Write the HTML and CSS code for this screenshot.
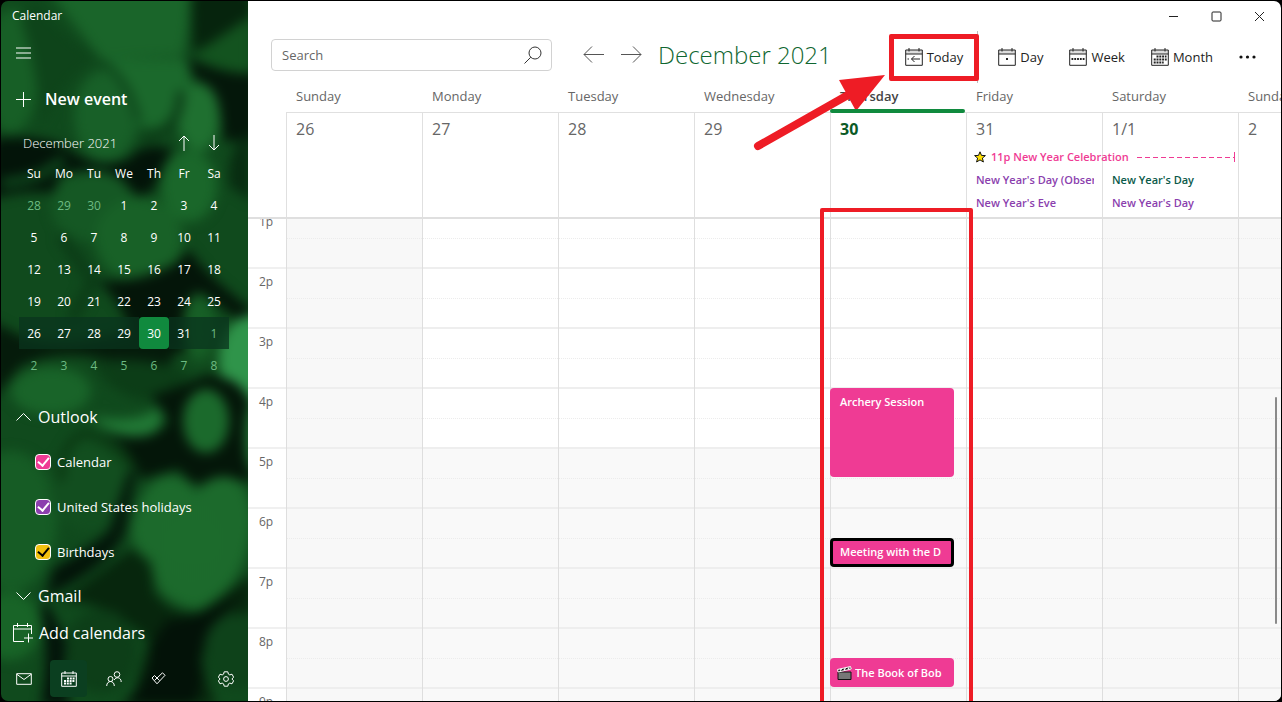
FILE: index.html
```html
<!DOCTYPE html>
<html lang="en">

<head>
    <meta charset="utf-8">
    <title>Calendar</title>
    <link rel="stylesheet" href="styles.css">
</head>

<body>
    <div class="window">
        <aside class="sidebar">
            <svg class="leaves" viewBox="0 0 247 700" preserveAspectRatio="none" aria-hidden="true">
                <defs>
                    <filter id="soft" x="-20%" y="-20%" width="140%" height="140%" color-interpolation-filters="sRGB">
                        <feGaussianBlur stdDeviation="6" />
                    </filter>
                    <radialGradient id="leaf">
                        <stop offset="0" stop-color="#1a672a" />
                        <stop offset="1" stop-color="#12501f" />
                    </radialGradient>
                    <radialGradient id="bright">
                        <stop offset="0" stop-color="#1c6b2c" />
                        <stop offset="1" stop-color="#1c6a2c" />
                    </radialGradient>
                </defs>
                <rect width="247" height="700" fill="#104a1d" />
                <g filter="url(#soft)">
                    <!-- top clover -->
                    <path d="M100 58L40-20H190Q190 20 182 55Z" fill="#1a652a" />
                    <path d="M100 58H185Q200 90 175 118Q150 135 130 120Z" fill="#1b692c" />
                    <ellipse cx="10" cy="70" rx="28" ry="62" fill="#175f26" />
                    <path d="M35 0Q60 35 98 55Q60 80 40 125Q35 60 20 20Z" fill="#0e441a" />
                    <ellipse cx="105" cy="115" rx="32" ry="46" fill="#186028" />
                    <path d="M100 60Q125 75 138 120" stroke="#0d4219" stroke-width="6" />
                    <!-- right edge -->
                    <path d="M190-10H250V20L192 52Z" fill="#06240d" />
                    <path d="M192 54L250 15V75Q215 70 192 54Z" fill="#13531f" />
                    <path d="M186 56Q225 75 255 72V140H222Q222 90 192 76Z" fill="#04170a" />
                    <ellipse cx="198" cy="116" rx="21" ry="34" fill="#1f7030" />
                    <path d="M180 90Q180 130 142 138" stroke="#0b3a16" stroke-width="8" />
                    <!-- gap under the top clover -->
                    <path d="M-10 138Q40 132 68 148Q95 170 128 158Q140 140 172 148L160 170Q150 205 130 190Q100 165 60 172L52 192Q25 188-10 198Z" fill="#031409" />
                    <path d="M0 182Q40 180 62 158" stroke="#0f4a1e" stroke-width="9" />
                    <path d="M250 130Q225 145 228 185L250 200Z" fill="#082c11" />
                    <ellipse cx="188" cy="185" rx="28" ry="36" fill="#1a672a" />
                    <!-- middle clover -->
                    <ellipse cx="92" cy="205" rx="42" ry="36" fill="#155824" />
                    <ellipse cx="138" cy="238" rx="44" ry="42" fill="#186127" />
                    <path d="M60 235L92 280L70 320" stroke="#0b3a16" stroke-width="10" />
                    <path d="M95 280Q140 282 175 262L188 248Q200 270 250 308V330Q215 300 198 292Q190 325 205 350L135 352Q125 300 95 280Z" fill="#041509" />
                    <ellipse cx="198" cy="326" rx="16" ry="34" fill="#175f26" />
                    <path d="M-10 320L20 335Q60 350 130 330L175 350Q165 385 120 362Q60 345 20 365L-10 400Z" fill="#051b0b" />
                    <ellipse cx="252" cy="358" rx="34" ry="44" fill="#2f944a" />
                    <!-- lower clovers -->
                    <ellipse cx="50" cy="390" rx="40" ry="24" fill="#196429" />
                    <path d="M90 360Q150 355 190 372Q170 395 145 400Q110 395 90 360Z" fill="#0c3d17" />
                    <path d="M90 415Q135 425 160 405Q165 435 138 436Q110 436 90 415Z" fill="#217835" />
                    <path d="M150 395Q180 385 205 374Q245 375 252 410L250 480H212Q192 490 178 468L140 478Q130 445 100 430Q150 445 168 420Z" fill="#041609" />
                    <ellipse cx="205" cy="420" rx="23" ry="32" fill="#1b6a2c" />
                    <ellipse cx="252" cy="435" rx="8" ry="34" fill="#217234" />
                    <ellipse cx="10" cy="520" rx="46" ry="70" fill="#165c25" />
                    <ellipse cx="90" cy="485" rx="42" ry="46" fill="#124e1f" />
                    <path d="M60 480Q60 440 85 432Q110 440 132 465" stroke="#09320f" stroke-width="6" />
                    <path d="M132 470Q125 500 122 525Q115 555 50 590L55 570Q100 545 112 530Z" fill="#021007" stroke="#04180b" stroke-width="8" />
                    <!-- heart leaf -->
                    <path d="M130 525Q145 470 175 475Q190 480 195 492Q210 470 235 478Q250 490 252 520Q245 590 195 608Q150 600 152 560Q130 550 130 525Z" fill="url(#bright)" />
                    <!-- bottom -->
                    <path d="M130 548Q155 560 152 590Q170 615 200 612L252 572V610Q210 625 200 660L215 705H130L148 640Q110 600 60 600Z" fill="#07260d" />
                    <path d="M165 620Q210 615 252 580Q210 620 200 655Q205 690 190 705H120Q150 680 150 645Z" fill="#031208" />
                    <path d="M45 600L65 640Q60 680 70 705H40Q50 650 40 610Z" fill="#03130a" />
                    <ellipse cx="8" cy="625" rx="32" ry="34" fill="#186427" />
                    <ellipse cx="100" cy="650" rx="36" ry="42" fill="#0d3e18" />
                    <ellipse cx="235" cy="650" rx="32" ry="38" fill="#0e421a" />
                </g>
            </svg>

            <h1 class="app-name">Calendar</h1>
            <button class="menu-btn" aria-label="Menu">
                <svg width="16" height="12" viewBox="0 0 16 12"><path d="M0 1h15M0 6h15M0 11h15" /></svg>
            </button>
            <button class="new-event">
                <svg width="15" height="15" viewBox="0 0 15 15"><path d="M7.5 0v15M0 7.5h15" /></svg>
                New event
            </button>

            <div class="mini-head">
                <span>December 2021</span>
                <button aria-label="Previous month">
                    <svg width="12" height="16" viewBox="0 0 12 16"><path d="M6 16V1M1 6l5-5 5 5" /></svg>
                </button>
                <button aria-label="Next month">
                    <svg width="12" height="16" viewBox="0 0 12 16"><path d="M6 0v15M1 10l5 5 5-5" /></svg>
                </button>
            </div>
            <table class="mini">
                <thead>
                    <tr><th>Su</th><th>Mo</th><th>Tu</th><th>We</th><th>Th</th><th>Fr</th><th>Sa</th></tr>
                </thead>
                <tbody>
                    <tr><td class="other">28</td><td class="other">29</td><td class="other">30</td><td>1</td><td>2</td><td>3</td><td>4</td></tr>
                    <tr><td>5</td><td>6</td><td>7</td><td>8</td><td>9</td><td>10</td><td>11</td></tr>
                    <tr><td>12</td><td>13</td><td>14</td><td>15</td><td>16</td><td>17</td><td>18</td></tr>
                    <tr><td>19</td><td>20</td><td>21</td><td>22</td><td>23</td><td>24</td><td>25</td></tr>
                    <tr class="current"><td>26</td><td>27</td><td>28</td><td>29</td><td class="selected">30</td><td>31</td><td class="other">1</td></tr>
                    <tr><td class="other">2</td><td class="other">3</td><td class="other">4</td><td class="other">5</td><td class="other">6</td><td class="other">7</td><td class="other">8</td></tr>
                </tbody>
            </table>

            <button class="account">
                <svg width="15" height="8" viewBox="0 0 15 8"><path d="M0.5 7.5l7-7 7 7" /></svg>
                Outlook
            </button>
            <label class="cal pink"><input type="checkbox" checked>Calendar</label>
            <label class="cal purple"><input type="checkbox" checked>United States holidays</label>
            <label class="cal yellow"><input type="checkbox" checked>Birthdays</label>
            <button class="account">
                <svg width="15" height="8" viewBox="0 0 15 8"><path d="M0.5 0.5l7 7 7-7" /></svg>
                Gmail
            </button>
            <button class="add-cal">
                <svg width="20" height="20" viewBox="0 0 20 20"><path d="M11 18.5H.5v-16h18V11M.5 6h18M4.500 0v4M14.500 0v4M15.500 10.500v9M11 15h9" /></svg>
                Add calendars
            </button>

            <nav class="apps">
                <a href="#" aria-label="Mail">
                    <svg width="16" height="12" viewBox="0 0 16 12"><path d="M.7.7h14.600v10.600H.7zM.7 1.200L8 6.500l7.300-5.300" /></svg>
                </a>
                <a href="#" class="active" aria-label="Calendar">
                    <svg width="16" height="16" viewBox="0 0 16 16"><path d="M.7 2h14.600v13.300H.7zM.7 5h14.600M4 0v3M12 0v3" /><path d="M6 7.500h8M3 10h11M3 12.500h8" stroke-width="2" stroke-dasharray="2 .8" /></svg>
                </a>
                <a href="#" aria-label="People">
                    <svg width="16" height="16" viewBox="0 0 16 16"><circle cx="4.500" cy="8" r="2.500" /><circle cx="11" cy="3.500" r="2.800" /><path d="M.7 15c0-6 7.600-6 7.600 0M8.200 9c1.500-3.500 7-3 7 2" /></svg>
                </a>
                <a href="#" aria-label="To Do">
                    <svg width="15" height="13" viewBox="0 0 15 13"><path d="M1 6l2.500-2.500 2.500 2.500L11.500.8 14 3.300 6 11.800zM6 6l2.500 2.500M3.500 8.500L6 6" /></svg>
                </a>
                <a href="#" class="settings" aria-label="Settings">
                    <svg width="16" height="16" viewBox="0 0 16 16"><path d="M6.200.8h3.600l.6 2.300 1.400.8 2.200-.7 1.600 3-1.700 1.800 1.700 1.800-1.600 3-2.200-.7-1.400.8-.6 2.300H6.200l-.6-2.300-1.400-.8-2.200.7-1.600-3L2.100 8 .4 6.200l1.600-3 2.200.7 1.400-.8z" /><circle cx="8" cy="8" r="2.400" /></svg>
                </a>
            </nav>
        </aside>

        <main class="main">
            <div class="titlebar">
                <button aria-label="Minimize"><svg width="11" height="11" viewBox="0 0 11 11"><path d="M1 5.500h9" /></svg></button>
                <button aria-label="Maximize"><svg width="11" height="11" viewBox="0 0 11 11"><rect x="1" y="1" width="9" height="9" rx="1" /></svg></button>
                <button aria-label="Close"><svg width="11" height="11" viewBox="0 0 11 11"><path d="M1 1l9 9M10 1l-9 9" /></svg></button>
            </div>

            <div class="toolbar">
                <div class="search">
                    <input type="text" placeholder="Search" aria-label="Search">
                    <svg width="18" height="18" viewBox="0 0 18 18"><circle cx="11" cy="7" r="6" /><path d="M6.800 11.200L.5 17.500" /></svg>
                </div>
                <div class="pager">
                    <button aria-label="Previous week"><svg width="21" height="18" viewBox="0 0 21 18"><path d="M21 8.500H1M9 .5l-8 8 8 8" /></svg></button>
                    <button aria-label="Next week"><svg width="21" height="18" viewBox="0 0 21 18"><path d="M0 8.500h20M12 .5l8 8-8 8" /></svg></button>
                </div>
                <h2>December 2021</h2>
                <div class="commands">
                    <button class="today-btn">
                        <svg width="18" height="18" viewBox="0 0 18 18"><path class="band" d="M1 2h16v4H1z" /><path d="M.7 2h16.600v15.300H.7zM.7 6h16.600M4 0v3.500M14 0v3.500M15 11H6.500M9.500 8l-3 3 3 3M2.500 11h1.500" /></svg>
                        Today
                    </button>
                    <button>
                        <svg width="18" height="18" viewBox="0 0 18 18"><path class="band" d="M1 2h16v4H1z" /><path d="M.7 2h16.600v15.300H.7zM.7 6h16.600M4 0v3.500M14 0v3.500" /><path d="M8 11h2" stroke-width="2" /></svg>
                        Day
                    </button>
                    <button>
                        <svg width="18" height="18" viewBox="0 0 18 18"><path class="band" d="M1 2h16v4H1z" /><path d="M.7 2h16.600v15.300H.7zM.7 6h16.600M4 0v3.500M14 0v3.500" /><path d="M2.500 11h13" stroke-width="2" stroke-dasharray="1.800 1" /></svg>
                        Week
                    </button>
                    <button>
                        <svg width="18" height="18" viewBox="0 0 18 18"><path class="band" d="M1 2h16v4H1z" /><path d="M.7 2h16.600v15.300H.7zM.7 6h16.600M4 0v3.500M14 0v3.500" /><path d="M5.500 8.500h10M2.700 11.500h13M2.700 14.500h10" stroke-width="2" stroke-dasharray="2 .8" /></svg>
                        Month
                    </button>
                    <button class="more" aria-label="More">
                        <svg width="17" height="4" viewBox="0 0 17 4"><circle cx="2" cy="2" r="1.600" /><circle cx="8.500" cy="2" r="1.600" /><circle cx="15" cy="2" r="1.600" /></svg>
                    </button>
                </div>
            </div>

            <section class="week">
                <div class="row weekdays">
                    <span></span>
                    <span>Sunday</span>
                    <span>Monday</span>
                    <span>Tuesday</span>
                    <span>Wednesday</span>
                    <span class="today">Thursday</span>
                    <span>Friday</span>
                    <span>Saturday</span>
                    <span>Sunday</span>
                </div>

                <div class="dates-wrap">
                    <div class="row dates">
                        <span></span>
                        <div class="date">26</div>
                        <div class="date">27</div>
                        <div class="date">28</div>
                        <div class="date">29</div>
                        <div class="date today">30</div>
                        <div class="date">31</div>
                        <div class="date">1/1</div>
                        <div class="date">2</div>
                    </div>
                    <div class="row alldays">
                        <div class="allday span">
                            <svg width="12" height="12" viewBox="0 0 12 12"><path d="M6 .8l1.500 3.600 3.900.2-3 2.500 1 3.900L6 8.900 2.600 11l1-3.900-3-2.500 3.900-.2z" /></svg>
                            <span>11p New Year Celebration</span>
                        </div>
                        <div class="allday fri second">New Year's Day (Observed)</div>
                        <div class="allday fri third">New Year's Eve</div>
                        <div class="allday sat second green">New Year's Day</div>
                        <div class="allday sat third">New Year's Day</div>
                    </div>
                </div>

                <div class="hours">
                    <div class="row scroll">
                        <div class="times">
                            <span>1p</span>
                            <span>2p</span>
                            <span>3p</span>
                            <span>4p</span>
                            <span>5p</span>
                            <span>6p</span>
                            <span>7p</span>
                            <span>8p</span>
                            <span>9p</span>
                        </div>
                        <div class="day weekend"></div>
                        <div class="day"></div>
                        <div class="day"></div>
                        <div class="day"></div>
                        <div class="day">
                            <div class="event long">Archery Session</div>
                            <div class="event meeting">Meeting with the D</div>
                            <div class="event show">
                                <svg width="15" height="14" viewBox="0 0 15 14"><path d="M1 6h13v7.500H1z" fill="#777" stroke="#111" /><path d="M.5 3.500L13.500.5l.7 2.500L1.200 6z" fill="#111" /><path d="M3 4.500l1.500-1.500M7 3.700l1.500-1.500M11 2.800l1.500-1.300" stroke="#fff" stroke-width="1.500" /></svg>
                                <span>The Book of Bob</span>
                            </div>
                        </div>
                        <div class="day"></div>
                        <div class="day weekend"></div>
                        <div class="day weekend"></div>
                    </div>
                    <div class="scrollbar"></div>
                </div>
                <div class="mark-column"></div>
            </section>

            <svg class="arrow" width="134" height="80" viewBox="0 0 134 80" aria-hidden="true">
                <path d="M5 74L95 23" stroke="#ee1c25" stroke-width="8" stroke-linecap="round" />
                <path d="M132 3L86 8l17 31z" fill="#ee1c25" />
            </svg>
        </main>
    </div>

    <script>
        // one slot per hour shown, 1p to 9p; work ends at 5p
        document.querySelectorAll(".day").forEach(day => {
            for (let hour = 1; hour <= 9; hour++) {
                const slot = document.createElement("div");
                slot.className = hour < 5 ? "slot work" : "slot";
                day.appendChild(slot);
            }
        });
    </script>
</body>

</html>
```
FILE: styles.css
```css
* {
    box-sizing: border-box;
}

body {
    margin: 0;
    background-color: #000;
    font-family: "Open Sans", "Noto Sans", sans-serif;
    color: #555;
}

button {
    padding: 0;
    border: none;
    background: none;
    font: inherit;
    color: inherit;
}

svg {
    flex: none;
    fill: none;
    stroke: currentColor;
}

h1,
h2 {
    margin: 0;
}

.window {
    display: flex;
    height: 100vh;
    border: 1px solid #000;
    border-radius: 8px;
    overflow: hidden;
}

/* Sidebar */
.sidebar {
    position: relative;
    z-index: 0;
    display: flex;
    flex-direction: column;
    flex: none;
    width: 247px;
    color: #fff;
    overflow: hidden;
}

.leaves {
    position: absolute;
    z-index: -1;
    inset: 0;
    width: 100%;
    height: 100%;
    stroke: none;
}

.app-name {
    padding-left: 11px;
    font-size: 12px;
    font-weight: 400;
    line-height: 30px;
}

.menu-btn {
    display: flex;
    align-items: center;
    height: 44px;
    padding-left: 15px;
}

.new-event {
    display: flex;
    align-items: center;
    gap: 14px;
    height: 48px;
    padding-left: 15px;
    font-size: 16px;
    font-weight: 600;
}

.mini-head {
    display: flex;
    align-items: center;
    height: 40px;
    padding: 0 28px 0 22px;
    gap: 18px;
    font-size: 13px;
    font-weight: 300;
}

.mini-head span {
    flex: 1;
}

.mini-head button {
    display: flex;
}

.mini {
    width: 210px;
    margin: -6px 0 0 18px;
    border-collapse: collapse;
    table-layout: fixed;
    font-size: 12px;
    text-align: center;
}

.mini th,
.mini td {
    height: 32px;
    padding: 0;
    font-weight: 400;
}

.mini .other {
    color: #6cbb83;
}

.mini .current {
    background-color: rgba(10, 52, 30, 0.75);
}

.mini .selected {
    border-radius: 4px;
    background-color: #108a3e;
}

.account {
    display: flex;
    align-items: center;
    gap: 7px;
    height: 44px;
    padding-left: 15px;
    font-size: 16px;
}

.mini + .account {
    margin-top: 14px;
}

.cal {
    display: flex;
    align-items: center;
    gap: 6px;
    height: 45px;
    padding-left: 34px;
    font-size: 13px;
}

.cal input {
    appearance: none;
    display: grid;
    place-items: center;
    width: 16px;
    height: 16px;
    margin: 0;
    border: 1px solid #fff;
    border-radius: 4px;
}

.cal input::after {
    content: "";
    width: 9px;
    height: 5px;
    margin-top: -3px;
    border: solid #fff;
    border-width: 0 0 2px 2px;
    transform: rotate(-50deg);
}

.cal.pink input {
    background-color: #ef3b94;
}

.cal.purple input {
    background-color: #8b3fae;
}

.cal.yellow input {
    background-color: #f2c10f;
}

.cal.yellow input::after {
    border-color: #000;
}

.add-cal {
    display: flex;
    align-items: center;
    gap: 6px;
    height: 30px;
    padding-left: 12px;
    font-size: 16px;
}

.apps {
    display: flex;
    gap: 8px;
    margin-top: auto;
    padding: 0 4px 4px;
}

.apps a {
    display: grid;
    place-items: center;
    width: 37px;
    height: 37px;
    border-radius: 4px;
    color: #fff;
}

.apps .active {
    background-color: #0b3f20;
}

.apps .settings {
    margin-left: auto;
}

/* Main area */
.main {
    position: relative;
    display: flex;
    flex-direction: column;
    flex: 1;
    min-width: 0;
    background-color: #fff;
}

.titlebar {
    display: flex;
    flex: none;
    justify-content: flex-end;
    height: 30px;
}

.titlebar button {
    width: 43px;
    color: #222;
}

.toolbar {
    display: flex;
    align-items: center;
    flex: none;
    height: 52px;
    padding-left: 23px;
}

.search {
    display: flex;
    align-items: center;
    width: 281px;
    height: 32px;
    margin-bottom: 4px;
    padding: 0 9px 0 10px;
    border: 1px solid #d2d2d2;
    border-radius: 4px;
    color: #333;
}

.search input {
    flex: 1;
    min-width: 0;
    padding: 0;
    border: none;
    outline: none;
    background: none;
    font: inherit;
    font-size: 13px;
}

.search input::placeholder {
    color: #666;
}

.pager {
    display: flex;
    gap: 17px;
    margin: 0 16px 4px 31px;
}

.pager button {
    display: flex;
}

.toolbar h2 {
    margin-bottom: 4px;
    font-size: 24px;
    font-weight: 300;
    line-height: 32px;
    color: #0f6630;
    white-space: nowrap;
}

.commands {
    display: flex;
    align-items: center;
    gap: 26px;
    height: 100%;
    margin-left: auto;
    padding-right: 25px;
    font-size: 13px;
    color: #222;
}

.commands button {
    display: flex;
    align-items: center;
    gap: 4px;
    height: 100%;
}

.commands .band {
    fill: #ddd;
    stroke: none;
}

.commands .today-btn {
    position: relative;
    padding-right: 14px;
    border-right: 1px solid #bbb;
    margin-right: -6px;
}

.today-btn::after {
    content: "";
    position: absolute;
    inset: 3px -2px 2px -16px;
    border: 5px solid #ee1c25;
    border-radius: 2px;
}

.commands .more svg {
    fill: #111;
    stroke: none;
}

/* Week view */
.week {
    position: relative;
    display: flex;
    flex-direction: column;
    flex: 1;
    min-height: 0;
    overflow: hidden;
}

.row {
    display: grid;
    grid-template-columns: 38px repeat(8, minmax(136px, 1fr));
}

.weekdays {
    flex: none;
    height: 29px;
    font-size: 13px;
    line-height: 27px;
    color: #666;
}

.weekdays span {
    padding-left: 10px;
}

.weekdays .today {
    position: relative;
    font-weight: 600;
    color: #444;
}

.weekdays .today::after {
    content: "";
    position: absolute;
    z-index: 1;
    left: 0;
    right: 1px;
    bottom: -1px;
    height: 4px;
    border-radius: 2px;
    background-color: #108a3e;
}

.dates-wrap {
    position: relative;
    flex: none;
    border-bottom: 2px solid #dfdfdf;
}

.date {
    height: 105px;
    padding-left: 9px;
    border-top: 1px solid #e0e0e0;
    border-left: 1px solid #e0e0e0;
    font-size: 16px;
    line-height: 32px;
    color: #666;
}

.date.today {
    font-weight: 700;
    color: #0b5a26;
}

/* events lie over the date cells, as they can run across days */
.alldays {
    position: absolute;
    inset: 0;
    grid-template-rows: 34px 22px 23px 24px;
}

.allday {
    align-self: center;
    margin: 0 8px 0 10px;
    font-size: 11px;
    font-weight: 600;
    line-height: 20px;
    color: #8b3fae;
    white-space: nowrap;
    overflow: hidden;
}

.allday.span {
    display: flex;
    align-items: center;
    gap: 5px;
    grid-row: 2;
    grid-column: 7 / 9;
    margin: 0 3px 0 8px;
    color: #ef3b94;
}

.allday.span svg {
    fill: #ffe000;
    stroke: #111;
}

.allday.span::after {
    content: "";
    flex: 1;
    height: 10px;
    margin-left: 3px;
    border-right: 1px solid #ef3b94;
    background: repeating-linear-gradient(90deg, #ef3b94 0 5px, transparent 5px 8px) center / 100% 1px no-repeat;
}

.allday.fri {
    grid-column: 7;
}

.allday.sat {
    grid-column: 8;
}

.allday.second {
    grid-row: 3;
}

.allday.third {
    grid-row: 4;
}

.allday.green {
    color: #0b5a4a;
}

.hours {
    position: relative;
    flex: 1;
    min-height: 0;
    overflow: hidden;
}

/* scrolled a little past 1p */
.scroll {
    margin-top: -12px;
}

.times span {
    display: block;
    height: 60px;
    padding-left: 11px;
    border-top: 2px solid #f0f0f0;
    font-size: 12px;
    line-height: 26px;
    color: #666;
}

.day {
    position: relative;
    border-left: 1px solid #dedede;
}

.slot {
    height: 60px;
    border-top: 2px solid #eee;
    background-color: #f9f9f9;
}

.slot.work {
    background-color: #fff;
}

.weekend .slot {
    background-color: #f8f8f8;
}

.slot::before {
    content: "";
    display: block;
    height: 29px;
    border-bottom: 1px dotted #ececec;
}

.event {
    position: absolute;
    left: -1px;
    right: 12px;
    height: 29px;
    padding: 0 10px;
    border-radius: 4px;
    background-color: #ef3b94;
    font-size: 11px;
    font-weight: 600;
    line-height: 28px;
    color: #fff;
    white-space: nowrap;
    overflow: hidden;
}

.event.long {
    top: 181px;
    height: 89px;
}

.event.meeting {
    top: 331px;
    padding: 0 7px;
    border: 3px solid #000;
    line-height: 22px;
}

.event.show {
    display: flex;
    align-items: center;
    gap: 3px;
    top: 451px;
    padding: 0 7px;
}

.event span {
    overflow: hidden;
}

.scrollbar {
    position: absolute;
    right: 4px;
    top: 37%;
    width: 2px;
    height: 47%;
    border-radius: 1px;
    background-color: #8a8a8a;
}

/* Highlights */
.mark-column {
    position: absolute;
    top: 125px;
    bottom: -8px;
    left: 572px;
    width: 153px;
    border: 4px solid #ee1c25;
    border-radius: 2px;
}

.arrow {
    position: absolute;
    top: 71px;
    left: 505px;
    stroke: none;
}
```
